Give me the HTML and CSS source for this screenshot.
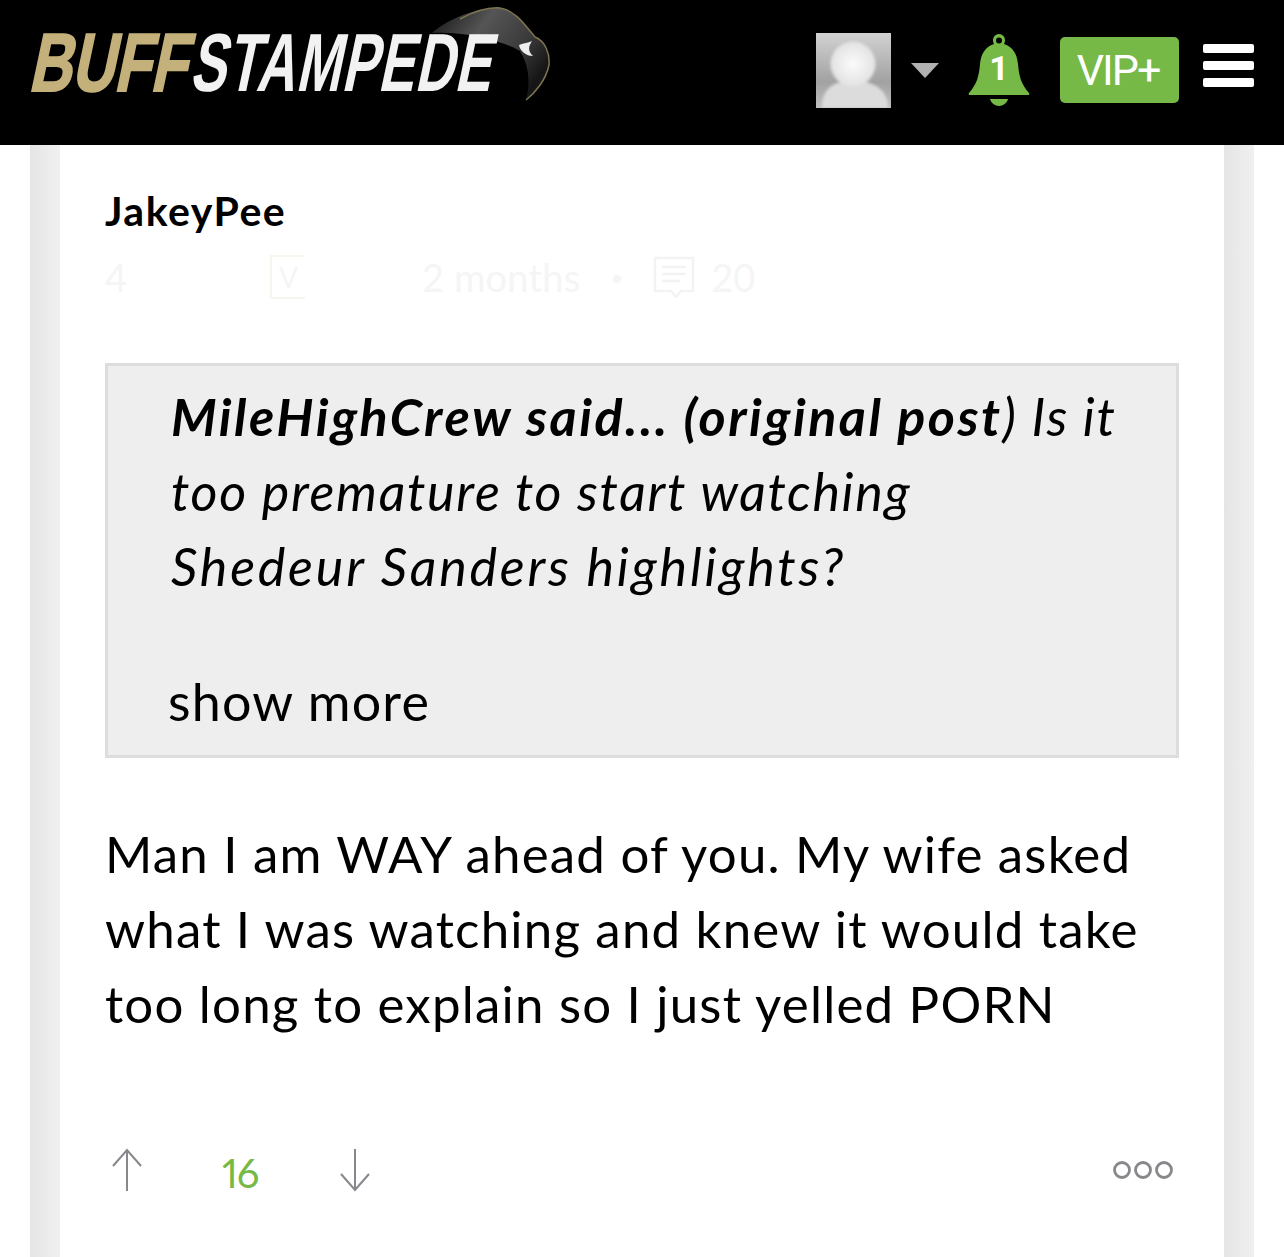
FILE: index.html
```html
<!DOCTYPE html>
<html lang="en">
<head>
<meta charset="utf-8">
<title>BuffStampede</title>
<link rel="stylesheet" href="styles.css">
</head>
<body>
<header class="topbar">
  <svg class="logo" width="530" height="100" viewBox="0 0 530 100">
    <defs>
      <linearGradient id="hump" x1="0" y1="0" x2="1" y2="0.6">
        <stop offset="0" stop-color="#111"/>
        <stop offset="0.4" stop-color="#555"/>
        <stop offset="0.75" stop-color="#3a3a3a"/>
        <stop offset="1" stop-color="#161616"/>
      </linearGradient>
    </defs>
    <path d="M402 28C420 12 450 2 470 3C485 5 495 20 505 32C515 36 520 48 519 60C516 75 505 88 496 95C500 80 500 62 490 46C470 34 430 26 402 28Z" fill="url(#hump)"/>
    <path d="M430 14C445 6 458 2 470 3C485 5 495 20 505 32C515 36 520 48 519 60C516 75 505 88 496 95" fill="none" stroke="#7f7452" stroke-width="1.500"/>
    <path d="M489 40C494 38 498 38 502 36C498 42 498 46 503 51C496 51 490 46 489 40Z" fill="#eee"/>
    <text class="logo-text logo-gold" transform="translate(-2 86) skewX(-12) scale(0.74 1.03)">BUFF</text>
    <text class="logo-text logo-white" transform="translate(159 86) skewX(-12) scale(0.675 1.03)">STAMPEDE</text>
  </svg>
  <div class="actions">
    <div class="avatar">
      <svg width="75" height="75" viewBox="0 0 75 75">
        <defs>
          <linearGradient id="avbg" x1="0" y1="0" x2="0" y2="1">
            <stop offset="0" stop-color="#d2d2d2"/>
            <stop offset="0.65" stop-color="#a2a2a2"/>
            <stop offset="1" stop-color="#c0c0c0"/>
          </linearGradient>
          <radialGradient id="avhead">
            <stop offset="0" stop-color="#fbfbfb"/>
            <stop offset="1" stop-color="#e2e2e2"/>
          </radialGradient>
        </defs>
        <rect width="75" height="75" fill="url(#avbg)"/>
        <g class="av-figure">
          <path d="M6 75C6 58 14 48 37 48C60 48 72 58 72 75Z" fill="#dcdcdc"/>
          <circle cx="37" cy="31" r="22.500" fill="url(#avhead)"/>
        </g>
      </svg>
    </div>
    <span class="caret"></span>
    <svg class="bell" width="62" height="74" viewBox="0 0 62 74">
      <path d="M31 1a6 6 0 0 1 6 6c0 2-.6 3-1 4 9 3 13 10 14 20 1 12 3 20 11 29 .6 1 .4 2-1 2H2c-1.400 0-1.600-1-1-2 8-9 10-17 11-29 1-10 5-17 14-20-.4-1-1-2-1-4a6 6 0 0 1 6-6Zm0 3.500a3 3 0 1 0 0 6 3 3 0 0 0 0-6Z" fill="#76b947" fill-rule="evenodd"/>
      <path d="M22 66h18c-1 4-5 7-9 7s-8-3-9-7Z" fill="#76b947"/>
      <text class="bell-num" x="31" y="47" text-anchor="middle">1</text>
    </svg>
    <div class="vip">VIP+</div>
    <div class="burger"><span></span><span></span><span></span></div>
  </div>
</header>

<main class="gutter">
  <article class="card">
    <h2 class="author">JakeyPee</h2>
    <div class="meta">
      <span class="meta-rank">4</span>
      <span class="meta-badge">V</span>
      <span class="meta-time">2 months</span>
      <span class="meta-dot">•</span>
      <svg class="meta-icon" width="42" height="42" viewBox="0 0 42 42">
        <path d="M2 2H40V35H28L23 41L18 35H2ZM9 11H33M9 18H33M9 25H27" fill="none" stroke="#f3f3f3" stroke-width="2.500"/>
      </svg>
      <span class="meta-count">20</span>
    </div>
    <blockquote class="quote">
      <p class="quote-text"><b class="quote-head">MileHighCrew said... (original post</b>) Is it<br>too premature to start watching<br><span class="quote-wide">Shedeur Sanders highlights?</span></p>
      <p class="more">show more</p>
    </blockquote>
    <p class="body-text">Man I am WAY ahead of you. My wife asked<br>what I was watching and knew it would take<br>too long to explain so I just yelled PORN</p>
    <footer class="votes">
      <svg class="arrow arrow-up" width="32" height="44" viewBox="0 0 32 44">
        <path d="M16 43V2M2 18L16 2L30 18" fill="none" stroke="#87878c" stroke-width="2"/>
      </svg>
      <span class="score">16</span>
      <svg class="arrow" width="32" height="44" viewBox="0 0 32 44">
        <path d="M16 1V42M2 26L16 42L30 26" fill="none" stroke="#87878c" stroke-width="2"/>
      </svg>
      <svg class="dots" width="62" height="20" viewBox="0 0 62 20">
        <circle cx="9" cy="10" r="7.500" fill="none" stroke="#87878c" stroke-width="2.800"/>
        <circle cx="30" cy="10" r="7.500" fill="none" stroke="#87878c" stroke-width="2.800"/>
        <circle cx="51" cy="10" r="7.500" fill="none" stroke="#87878c" stroke-width="2.800"/>
      </svg>
    </footer>
  </article>
</main>
</body>
</html>
```

FILE: styles.css
```css
* { box-sizing: border-box; }
html, body { margin: 0; padding: 0; background: #fff; }
body {
  width: 1284px;
  height: 1257px;
  overflow: hidden;
  font-family: "Lato", "Open Sans", sans-serif;
  color: #000;
}
.topbar {
  height: 145px;
  background: #000;
  display: flex;
  align-items: flex-start;
  justify-content: space-between;
  padding: 5px 30px 0 30px;
}
.logo { display: block; overflow: visible; filter: blur(0.7px); }
.logo-text {
  font-family: "Liberation Sans", sans-serif;
  font-weight: 700;
  font-size: 80px;
}
.logo-gold { fill: #c4b07a; stroke: #c4b07a; stroke-width: 2px; }
.logo-white { fill: #f2f2f2; letter-spacing: 1px; }
.actions {
  display: flex;
  align-items: center;
  height: 75px;
  margin-top: 28px;
}
.avatar { width: 75px; height: 75px; margin-right: -1px; }
.avatar svg { display: block; }
.av-figure { filter: blur(1.5px); }
.caret {
  width: 0;
  height: 0;
  margin-left: 21px;
  border-left: 14px solid transparent;
  border-right: 14px solid transparent;
  border-top: 15px solid #b2b2b2;
}
.bell { margin-left: 29px; margin-top: -1px; display: block; }
.bell-num { font-family: "Roboto", sans-serif; font-weight: 700; font-size: 34px; fill: #fff; }
.vip {
  width: 119px;
  height: 66px;
  margin-left: 30px;
  margin-top: -1px;
  padding-right: 3px;
  background: #76b947;
  border-radius: 5px;
  color: #fff;
  font-family: "Roboto", sans-serif;
  font-size: 43px;
  line-height: 66px;
  text-align: center;
  letter-spacing: -2px;
}
.burger {
  display: flex;
  flex-direction: column;
  gap: 8px;
  margin-left: 24px;
  margin-top: -11px;
}
.burger span {
  display: block;
  width: 51px;
  height: 9px;
  background: #fff;
  border-radius: 2px;
}
.gutter {
  margin: 0 30px;
  padding: 0 30px;
  height: 1112px;
  background: linear-gradient(to right, #e5e5e5, #f0f0f0 30px, #e5e5e5 1194px, #f0f0f0);
}
.card {
  height: 100%;
  background: #fff;
  padding: 43px 45px 0;
}
.author {
  margin: 0;
  font-size: 41px;
  line-height: 46px;
  font-weight: 700;
  letter-spacing: 1.500px;
}
.meta {
  display: flex;
  align-items: center;
  height: 42px;
  margin-top: 22px;
  font-size: 38px;
  color: #f5f5f5;
}
.meta-rank { width: 165px; }
.meta-badge {
  width: 35px;
  height: 44px;
  border: 2px solid #f5f6ee;
  border-right: 0;
  font-size: 28px;
  line-height: 40px;
  text-align: center;
}
.meta-time { margin-left: 117px; letter-spacing: 0.2px; }
.meta-dot { margin-left: 30px; font-size: 22px; }
.meta-icon { margin-left: 30px; display: block; }
.meta-count { margin-left: 16px; }
.quote {
  margin: 65px 0 0;
  height: 395px;
  background: #eee;
  border: 3px solid #ddd;
  padding: 13px 40px 0 63px;
}
.quote-text {
  margin: 0;
  font-size: 52px;
  line-height: 75px;
  font-style: italic;
  letter-spacing: 1.700px;
}
.quote-head { letter-spacing: 2.500px; }
.quote-wide { letter-spacing: 2.800px; }
.more {
  margin: 60px 0 0 -3px;
  font-size: 52px;
  line-height: 75px;
  letter-spacing: 1.200px;
}
.body-text {
  margin: 58px 0 0;
  font-size: 51px;
  line-height: 75px;
  letter-spacing: 1.200px;
}
.votes {
  display: flex;
  align-items: center;
  margin-top: 105px;
  height: 48px;
}
.arrow { display: block; }
.arrow-up { margin-left: 6px; }
.score {
  margin-left: 79px;
  margin-right: 81px;
  font-size: 40px;
  color: #76b947;
  font-variant-numeric: proportional-nums;
  letter-spacing: -1px;
  position: relative;
  top: 3px;
}
.dots { margin-left: auto; margin-right: 4px; display: block; }
```
